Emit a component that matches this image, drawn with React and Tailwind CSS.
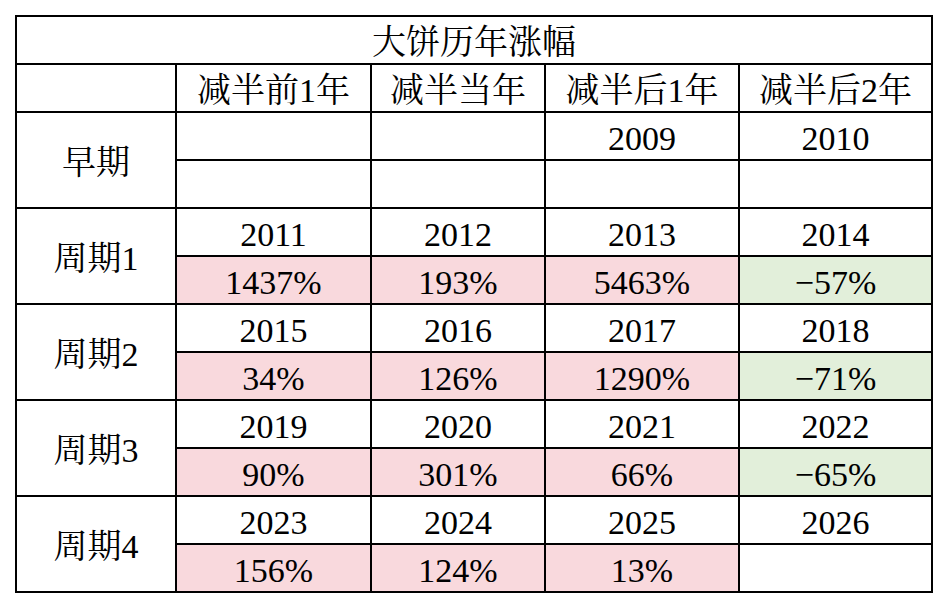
import React from "react";

const PINK = "bg-[#f9d9dd]";
const GREEN = "bg-[#e2efda]";

const cycles = [
  {
    name: "周期1",
    years: ["2011", "2012", "2013", "2014"],
    pct: ["1437%", "193%", "5463%", "−57%"],
  },
  {
    name: "周期2",
    years: ["2015", "2016", "2017", "2018"],
    pct: ["34%", "126%", "1290%", "−71%"],
  },
  {
    name: "周期3",
    years: ["2019", "2020", "2021", "2022"],
    pct: ["90%", "301%", "66%", "−65%"],
  },
  {
    name: "周期4",
    years: ["2023", "2024", "2025", "2026"],
    pct: ["156%", "124%", "13%", ""],
  },
];

function Cell({ children, className = "" }) {
  return (
    <div className={`flex items-center justify-center pt-[6px] ${className || "bg-white"}`}>
      <span className="font-['Liberation_Serif','Noto_Serif_CJK_SC',serif]">{children}</span>
    </div>
  );
}

export default function App() {
  return (
    <div className="w-[948px] h-[608px] bg-white pt-[15px] pl-[15px]">
      <div className="w-fit bg-black p-[2px] text-black text-[34px] leading-none">
        <div className="grid grid-cols-[158px_193px_172px_192px_191px] auto-rows-[46px] gap-[2px]">
          {/* title */}
          <Cell className="col-span-5 bg-white">大饼历年涨幅</Cell>

          {/* header */}
          <Cell />
          <Cell>减半前1年</Cell>
          <Cell>减半当年</Cell>
          <Cell>减半后1年</Cell>
          <Cell>减半后2年</Cell>

          {/* early */}
          <Cell className="row-span-2 bg-white">早期</Cell>
          <Cell />
          <Cell />
          <Cell>2009</Cell>
          <Cell>2010</Cell>
          <Cell />
          <Cell />
          <Cell />
          <Cell />

          {cycles.map((c) => (
            <React.Fragment key={c.name}>
              <Cell className="row-span-2 bg-white">{c.name}</Cell>
              {c.years.map((y) => (
                <Cell key={y}>{y}</Cell>
              ))}
              {c.pct.map((p, i) => (
                <Cell
                  key={i}
                  className={p === "" ? "bg-white" : p.startsWith("−") ? GREEN : PINK}
                >
                  {p}
                </Cell>
              ))}
            </React.Fragment>
          ))}
        </div>
      </div>
    </div>
  );
}
